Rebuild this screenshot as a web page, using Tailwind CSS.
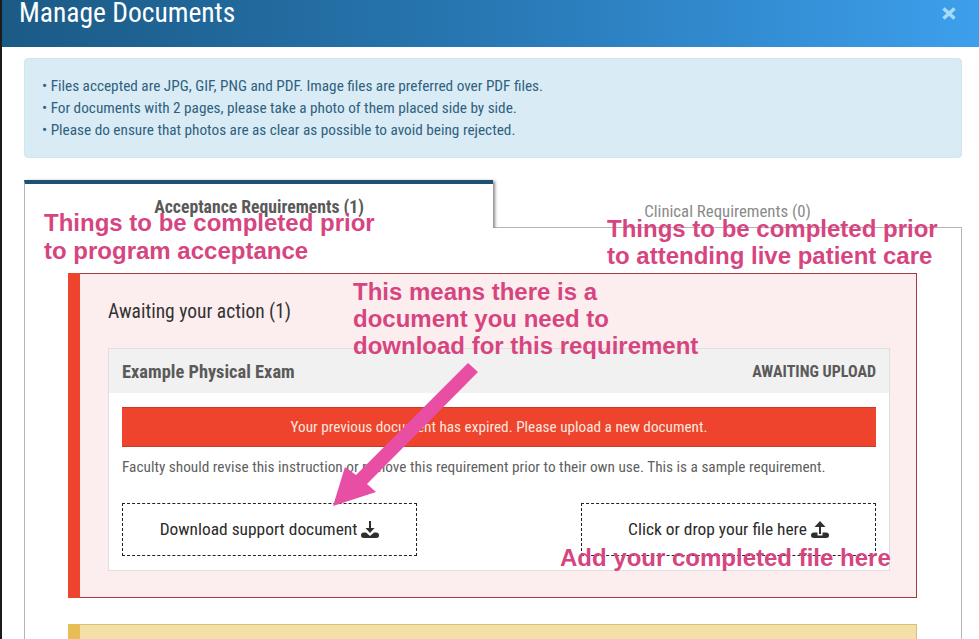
<!DOCTYPE html>
<html lang="en">
<head>
    <meta charset="UTF-8">
    <meta name="viewport" content="width=device-width, initial-scale=1.0">
    <title>Manage Documents</title>
    <script src="https://cdn.jsdelivr.net/npm/@tailwindcss/browser@4"></script>
</head>
<body class="bg-white">
    <div class="relative flex w-[979px] h-[639px] overflow-hidden bg-white font-['Roboto',sans-serif] [font-stretch:75%]">
        <div class="w-[2px] shrink-0 bg-[#1c1c1c]"></div>
        <div class="flex-1 min-w-0">
            <!-- header -->
            <div class="flex justify-between h-[47px] pl-[17px] pr-[23px] bg-gradient-to-r from-[#1b5a85] via-[#2878b4] to-[#3d9fec] text-white">
                <div class="text-[27.500px] leading-[25px]">Manage Documents</div>
                <svg class="mt-[7px] w-[14px] h-[13px]" viewBox="0 0 14 13" fill="none" stroke="#a5dcf5" stroke-width="3.500"><path d="M1.500 1.500l11 10M12.500 1.500l-11 10"/></svg>
            </div>

            <div class="pl-[22px] pr-[17px]">
                <!-- notes -->
                <div class="mt-[11px] h-[100px] pt-[16px] px-[17px] rounded bg-[#d9ebf5] border border-[#d2e6ee] text-[15.250px] leading-[22px] text-[#2f617f]">
                    <div>• Files accepted are JPG, GIF, PNG and PDF. Image files are preferred over PDF files.</div>
                    <div>• For documents with 2 pages, please take a photo of them placed side by side.</div>
                    <div>• Please do ensure that photos are as clear as possible to avoid being rejected.</div>
                </div>

                <!-- tabs -->
                <div class="flex mt-[22px] h-[48px]">
                    <div class="w-[469px] pt-[10px] text-center text-[17.700px] font-bold text-[#595959] bg-white border-l border-[#b5b5b5] border-t-4 border-t-[#1f5272] shadow-[2px_1px_3px_#888] [clip-path:inset(-4px_-6px_0_0)]">Acceptance Requirements (1)</div>
                    <div class="flex-1 pt-[19px] text-center text-[16.800px] text-[#8a8a8a] border-b border-[#b5b5b5]">Clinical Requirements (0)</div>
                </div>

                <div class="h-[420px] pl-[43px] pr-[44px] pt-[45px] border-l border-r border-[#b5b5b5]">
                    <!-- red panel -->
                    <div class="flex h-[325px] border border-[#a33a3f] bg-[#fceeef]">
                        <div class="w-[12px] -ml-px -my-px bg-[#ee432d]"></div>
                        <div class="flex-1 pl-[28px] pr-[26px]">
                            <div class="h-[74px] pt-[25px] text-[19.500px] leading-[26px] text-[#333]">Awaiting your action (1)</div>
                            <div class="h-[223px] bg-white border border-[#e3dde0]">
                                <div class="flex justify-between items-center h-[44px] pt-[2px] px-[13px] bg-[#f1f1f1] font-bold text-[#5a5a5a]">
                                    <span class="text-[18.400px]">Example Physical Exam</span>
                                    <span class="text-[16px]">AWAITING UPLOAD</span>
                                </div>
                                <div class="px-[13px] pt-[14px]">
                                    <div class="flex items-center justify-center h-[40px] bg-[#ee432d] border-t border-b border-[#c9392a] text-[15.250px] text-[#fde8df]">Your previous document has expired. Please upload a new document.</div>
                                    <div class="mt-[10px] text-[15.300px] leading-[20px] text-[#5f5f5f]">Faculty should revise this instruction or remove this requirement prior to their own use. This is a sample requirement.</div>
                                    <div class="flex justify-between mt-[26px]">
                                        <div class="flex items-center justify-center gap-[4px] w-[295px] h-[53px] border border-dashed border-[#222] text-[17.400px] text-[#2b2b2b]">
                                            <span>Download support document</span>
                                            <svg class="w-[18px] h-[17px]" viewBox="0 0 18 17" fill="#2f2f2f"><path d="M8 0h2v7h3.500L9 12 4.500 7H8z"/><path d="M0 14Q0 11.500 3 11.500H5L9 15l4-3.500h2q3 0 3 2.500v.5q0 2.500-3 2.500H3q-3 0-3-2.500z"/></svg>
                                        </div>
                                        <div class="flex items-center justify-center gap-[4px] w-[295px] h-[53px] border border-dashed border-[#222] text-[17.400px] text-[#2b2b2b]">
                                            <span>Click or drop your file here</span>
                                            <svg class="w-[18px] h-[17px]" viewBox="0 0 18 17" fill="#2f2f2f"><path d="M9 0l5.500 6H10v7H8V6H3.500z"/><path d="M0 14Q0 11.500 3 11.500H6.500V14.500H11.500V11.500H15q3 0 3 2.500v.5q0 2.500-3 2.500H3q-3 0-3-2.500z"/></svg>
                                        </div>
                                    </div>
                                </div>
                            </div>
                        </div>
                    </div>
                    <!-- yellow panel, cut off by the window -->
                    <div class="flex h-[60px] mt-[26px] border border-[#d9bf7a] bg-[#f2e0a8]">
                        <div class="w-[12px] -ml-px -my-px bg-[#e8bd55]"></div>
                    </div>
                </div>
            </div>
        </div>

        <!-- pink notes drawn over the screenshot -->
        <div class="absolute left-[44px] top-[209px] font-['Liberation_Sans',sans-serif] [font-stretch:100%] font-bold text-[24px] leading-[28px] text-[#d6457f] whitespace-nowrap">Things to be completed prior<br>to program acceptance</div>
        <div class="absolute left-[607px] top-[215px] font-['Liberation_Sans',sans-serif] [font-stretch:100%] font-bold text-[24px] leading-[27px] text-[#d6457f] whitespace-nowrap">Things to be completed prior<br>to attending live patient care</div>
        <div class="absolute left-[353px] top-[278px] font-['Liberation_Sans',sans-serif] [font-stretch:100%] font-bold text-[24px] leading-[27px] text-[#d6457f] whitespace-nowrap">This means there is a<br>document you need to<br>download for this requirement</div>
        <div class="absolute left-[560px] top-[544px] font-['Liberation_Sans',sans-serif] [font-stretch:100%] font-bold text-[24px] leading-[28px] text-[#d6457f] whitespace-nowrap">Add your completed file here</div>
        <svg class="absolute left-0 top-0 w-[979px] h-[639px] pointer-events-none" viewBox="0 0 979 639"><polygon fill="#e84fa4" points="468,363 478,372 367,484 376,492 333,506 345,467 356,475"/></svg>
    </div>
</body>
</html>
